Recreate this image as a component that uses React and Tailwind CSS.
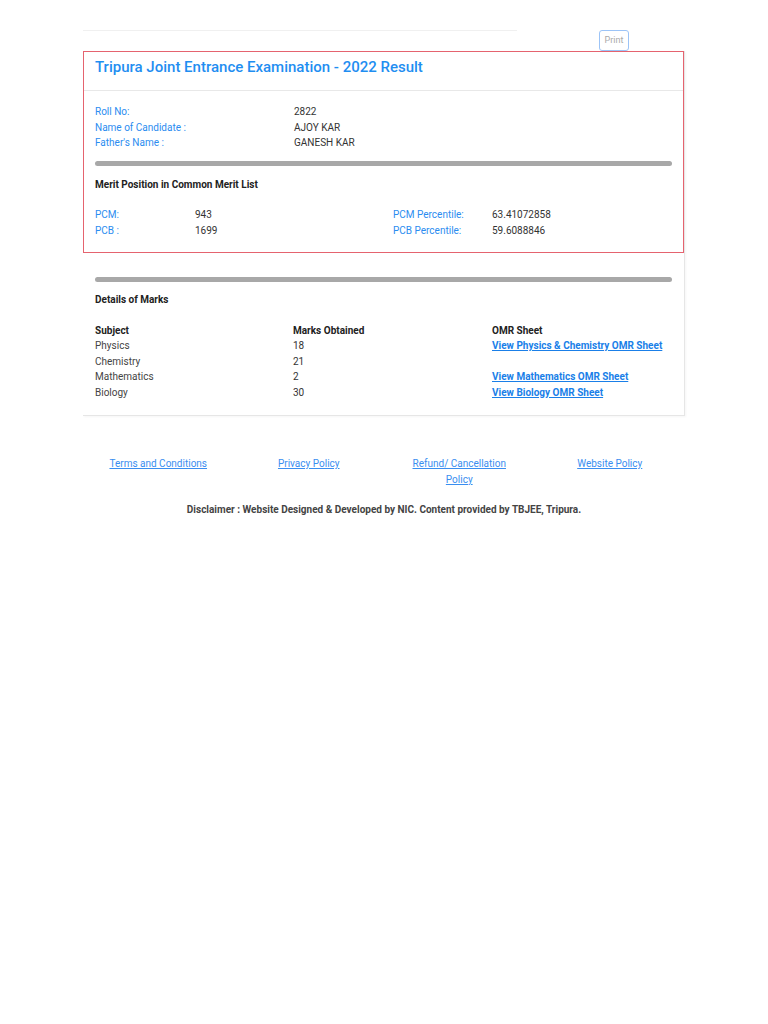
import React from 'react';

const blue = 'text-[#2b8cf0]';

function Bar() {
    return <div className="h-[5px] rounded-[3px] bg-[#a8a8a8]" />;
}

export default function App() {
    const footerLinks = ['Terms and Conditions', 'Privacy Policy', 'Refund/ Cancellation Policy', 'Website Policy'];

    return (
        <div className="min-h-[1024px] bg-white pt-[30px] text-[10px] leading-[15.5px] text-[#333]" style={{ fontFamily: 'Roboto, "Liberation Sans", sans-serif' }}>
            <div className="mx-auto w-[602px]">
                {/* top bar with print */}
                <div className="relative h-[21px]">
                    <div className="w-[434px] border-t border-[#f0f0f0]" />
                    <button className="absolute right-[56px] top-0 h-[21px] w-[30px] rounded-[3px] border border-[#9cc4f7] text-[9px] leading-none text-[#aaa]">
                        Print
                    </button>
                </div>

                <div className="border-r border-b border-[#e6e6e6] shadow-[1px_1px_2px_rgba(0,0,0,0.04)]">
                    {/* RESULT BOX */}
                    <div className="border border-solid border-[#e5636f]">
                        <div className="border-b border-[#e8e8e8] px-[11px] pt-[6px] pb-[14px]">
                            <h1 className="text-[15px] leading-[18px] font-medium text-[#1f8ef1]">
                                Tripura Joint Entrance Examination - 2022 Result
                            </h1>
                        </div>

                        <div className="px-[11px] pt-[13px] pb-[14px]">
                            <div className="grid grid-cols-[199px_1fr]">
                                <span className={blue}>Roll No:</span>
                                <span>2822</span>
                                <span className={blue}>Name of Candidate :</span>
                                <span>AJOY KAR</span>
                                <span className={blue}>Father's Name :</span>
                                <span>GANESH KAR</span>
                            </div>

                            <div className="mt-[10px]">
                                <Bar />
                            </div>

                            <p className="mt-[11px] font-bold text-[#222]">Merit Position in Common Merit List</p>

                            <div className="mt-[15px] grid grid-cols-[100px_198px_99px_1fr]">
                                <span className={blue}>PCM:</span>
                                <span>943</span>
                                <span className={blue}>PCM Percentile:</span>
                                <span>63.41072858</span>
                                <span className={blue}>PCB :</span>
                                <span>1699</span>
                                <span className={blue}>PCB Percentile:</span>
                                <span>59.6088846</span>
                            </div>
                        </div>
                    </div>

                    {/* MARKS */}
                    <div className="px-[12px] pt-[24px] pb-[15px]">
                        <Bar />
                        <p className="mt-[10px] font-bold text-[#222]">Details of Marks</p>

                        <div className="mt-[15px] grid grid-cols-[198px_199px_1fr]">
                            <span className="font-bold text-[#222]">Subject</span>
                            <span className="font-bold text-[#222]">Marks Obtained</span>
                            <span className="font-bold text-[#222]">OMR Sheet</span>

                            <span className="text-[#444]">Physics</span>
                            <span>18</span>
                            <a href="#" className="font-bold text-[#1a7fe8] underline">View Physics &amp; Chemistry OMR Sheet</a>

                            <span className="text-[#444]">Chemistry</span>
                            <span>21</span>
                            <span />

                            <span className="text-[#444]">Mathematics</span>
                            <span>2</span>
                            <a href="#" className="font-bold text-[#1a7fe8] underline">View Mathematics OMR Sheet</a>

                            <span className="text-[#444]">Biology</span>
                            <span>30</span>
                            <a href="#" className="font-bold text-[#1a7fe8] underline">View Biology OMR Sheet</a>
                        </div>
                    </div>
                </div>

                {/* FOOTER */}
                <div className="mt-[40px] grid grid-cols-4">
                    {footerLinks.map((l) => (
                        <div key={l} className="px-[15px] text-center">
                            <a href="#" className="text-[#3a8ef0] underline">{l}</a>
                        </div>
                    ))}
                </div>

                <p className="mt-[15px] text-center font-bold text-[#444]">
                    Disclaimer : Website Designed &amp; Developed by NIC. Content provided by TBJEE, Tripura.
                </p>
            </div>
        </div>
    );
}
